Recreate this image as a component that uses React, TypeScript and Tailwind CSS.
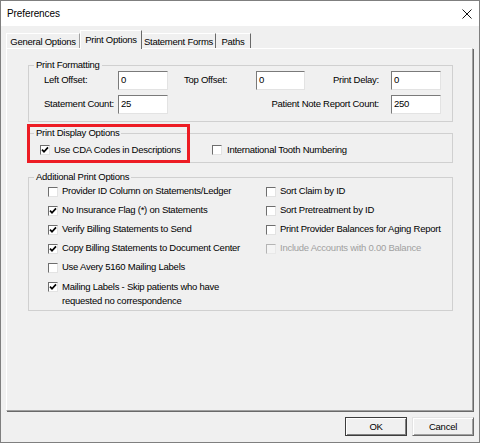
import React from "react";

function Check({ checked = false, disabled = false }: { checked?: boolean; disabled?: boolean }) {
  return (
    <span
      className={
        disabled
          ? "w-[10px] h-[10px] shrink-0 flex items-center justify-center bg-[#f4f4f4] border border-t-[#b4b4b4] border-l-[#b4b4b4] border-r-[#e8e8e8] border-b-[#e8e8e8]"
          : "w-[10px] h-[10px] shrink-0 flex items-center justify-center bg-white border border-t-[#6e6e6e] border-l-[#6e6e6e] border-r-[#e3e3e3] border-b-[#e3e3e3]"
      }
    >
      {checked && (
        <svg width="8" height="8" viewBox="0 0 8 8">
          <path d="M1 3.6 L3 5.8 L7 1.4" stroke="#000" strokeWidth="1.7" fill="none" />
        </svg>
      )}
    </span>
  );
}

function Field({ value, w = "w-[50px]" }: { value: string; w?: string }) {
  return (
    <div
      className={`${w} h-[19px] shrink-0 bg-white border border-t-[#7a7a7a] border-l-[#7a7a7a] border-r-[#e3e3e3] border-b-[#e3e3e3] pl-[2px] pt-[2px] leading-[12px]`}
    >
      {value}
    </div>
  );
}

function Row({ checked, label, disabled }: { checked?: boolean; label: string; disabled?: boolean }) {
  return (
    <div className="h-[19px] flex items-center gap-[4px] whitespace-nowrap">
      <Check checked={checked} disabled={disabled} />
      <span className={disabled ? "text-[#a0a0a0]" : "text-black"}>{label}</span>
    </div>
  );
}

export default function App() {
  return (
    <div className="relative w-[480px] h-[443px] bg-[#f0f0f0] border border-[#7f7f7f] flex flex-col font-['Liberation_Sans',Arial,sans-serif] text-[9.5px] tracking-[-0.25px] text-black overflow-hidden whitespace-nowrap">
      {/* Title bar */}
      <div className="h-[25px] shrink-0 bg-white flex items-center justify-between pl-[6px] pr-[7px]">
        <span className="text-[10px] tracking-[-0.1px]">Preferences</span>
        <svg width="10" height="10" viewBox="0 0 10 10">
          <path d="M0.5 0.5 L9.5 9.5 M9.5 0.5 L0.5 9.5" stroke="#111" strokeWidth="1" fill="none" />
        </svg>
      </div>

      {/* Tabs */}
      <div className="h-[22px] shrink-0 flex items-end pl-[5px]">
        <div className="w-[74px] h-[15px] flex items-center justify-center pt-[2px] border-t border-l border-r border-t-white border-l-white border-r-[#a0a0a0]">
          General Options
        </div>
        <div className="relative z-10 -mb-px w-[62px] h-[19px] flex items-center justify-center bg-[#f0f0f0] border-t border-l border-r border-t-white border-l-white border-r-[#696969]">
          Print Options
        </div>
        <div className="w-[74px] h-[15px] flex items-center justify-center pt-[2px] border-t border-r border-t-white border-r-[#696969]">
          Statement Forms
        </div>
        <div className="w-[35px] h-[15px] flex items-center justify-center pt-[2px] border-t border-r border-t-white border-r-[#696969]">
          Paths
        </div>
      </div>

      {/* Tab panel */}
      <div className="ml-[5px] w-[467px] h-[363px] shrink-0 border border-t-white border-l-white border-r-[#a0a0a0] border-b-[#a0a0a0] shadow-[1px_1px_0_#696969] pl-[21px] pt-[10px]">
        {/* Print Formatting */}
        <fieldset className="w-[425px] border border-[#d0d0d0]">
          <legend className="ml-[5px] px-[2px] leading-[12px]">Print Formatting</legend>
          <div className="flex flex-col gap-[5px] pb-[7px]">
            <div className="flex items-center">
              <span className="w-[74px] pl-[15px] box-content shrink-0">Left Offset:</span>
              <Field value="0" />
              <span className="ml-[16px] w-[72px] shrink-0">Top Offset:</span>
              <Field value="0" w="w-[49px]" />
              <span className="w-[74px] shrink-0 text-right">Print Delay:</span>
              <span className="w-[12px] shrink-0" />
              <Field value="0" />
            </div>
            <div className="flex items-center">
              <span className="w-[74px] pl-[15px] box-content shrink-0">Statement Count:</span>
              <Field value="25" />
              <span className="flex-1 text-right pr-[12px]">Patient Note Report Count:</span>
              <Field value="250" />
              <span className="w-[11px] shrink-0" />
            </div>
          </div>
        </fieldset>

        {/* Print Display Options */}
        <fieldset className="mt-[5px] w-[425px] border border-[#d0d0d0]">
          <legend className="ml-[5px] px-[2px] leading-[12px]">Print Display Options</legend>
          <div className="flex items-center h-[20px] mt-[1px] mb-[2px] pl-[11px]">
            <div className="w-[172px] flex items-center gap-[4px]">
              <Check checked />
              <span>Use CDA Codes in Descriptions</span>
            </div>
            <div className="flex items-center gap-[5px]">
              <Check />
              <span>International Tooth Numbering</span>
            </div>
          </div>
        </fieldset>

        {/* Additional Print Options */}
        <fieldset className="mt-[8px] w-[425px] border border-[#d0d0d0]">
          <legend className="ml-[5px] px-[2px] leading-[12px]">Additional Print Options</legend>
          <div className="-mt-px flex pl-[19px] pb-[3px]">
            <div className="w-[218px] flex flex-col">
              <Row label="Provider ID Column on Statements/Ledger" />
              <Row checked label="No Insurance Flag (*) on Statements" />
              <Row checked label="Verify Billing Statements to Send" />
              <Row checked label="Copy Billing Statements to Document Center" />
              <Row label="Use Avery 5160 Mailing Labels" />
              <div className="flex items-start gap-[4px] pt-[3px]">
                <span className="mt-[2px]">
                  <Check checked />
                </span>
                <span className="leading-[13.5px]">
                  Mailing Labels - Skip patients who have
                  <br />
                  requested no correspondence
                </span>
              </div>
            </div>
            <div className="flex flex-col">
              <Row label="Sort Claim by ID" />
              <Row label="Sort Pretreatment by ID" />
              <Row label="Print Provider Balances for Aging Report" />
              <Row disabled label="Include Accounts with 0.00 Balance" />
            </div>
          </div>
        </fieldset>
      </div>

      {/* Buttons */}
      <div className="mt-[6px] flex justify-end gap-[5px] pr-[5px]">
        <button className="w-[62px] h-[19px] bg-[#f0f0f0] border border-[#3c3c3c] shadow-[inset_1px_1px_0_#ffffff,inset_-1px_-1px_0_#808080] flex items-center justify-center leading-none">
          OK
        </button>
        <button className="w-[62px] h-[19px] bg-[#f0f0f0] border border-t-[#e3e3e3] border-l-[#e3e3e3] border-r-[#696969] border-b-[#696969] shadow-[inset_1px_1px_0_#ffffff,inset_-1px_-1px_0_#a0a0a0] flex items-center justify-center leading-none">
          Cancel
        </button>
      </div>

      {/* Red highlight annotation */}
      <div className="absolute left-[26px] top-[123px] w-[163px] h-[39px] border-[3px] border-[#ed1c24] pointer-events-none" />
    </div>
  );
}
